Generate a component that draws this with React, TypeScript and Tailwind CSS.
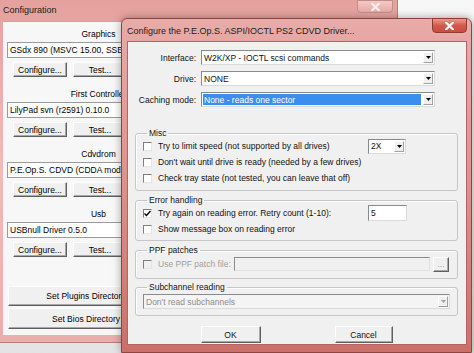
import React from "react";

function Arrow({ disabled = false }: { disabled?: boolean }) {
  return (
    <div className="w-[10px] h-full flex items-center justify-center bg-[#f0f0f0] border border-t-white border-l-white border-r-[#a0a0a0] border-b-[#a0a0a0]">
      <svg width="5" height="3" viewBox="0 0 5 3">
        <path d="M0 0h5L2.5 3z" fill={disabled ? "#a0a0a0" : "#000"} />
      </svg>
    </div>
  );
}

function Combo({
  text,
  className = "",
  selected = false,
  disabled = false,
}: {
  text: string;
  className?: string;
  selected?: boolean;
  disabled?: boolean;
}) {
  return (
    <div
      className={`flex h-[15px] border border-t-[#8a8a8a] border-l-[#8a8a8a] border-r-[#dadada] border-b-[#dadada] p-[1px] ${
        disabled ? "bg-[#f4f4f4] text-[#8c8c8c]" : "bg-white"
      } ${className}`}
    >
      <div className="flex-1 min-w-0 flex items-center pr-[2px]">
        {selected ? (
          <span className="w-full h-full flex items-center px-[1px] bg-[#3a8ef0] text-white whitespace-nowrap">
            {text}
          </span>
        ) : (
          <span className="px-[1px] whitespace-nowrap overflow-hidden">{text}</span>
        )}
      </div>
      <Arrow disabled={disabled} />
    </div>
  );
}

function Field({ text, className = "" }: { text: string; className?: string }) {
  return (
    <div
      className={`flex items-center h-[16px] bg-white border border-t-[#8a8a8a] border-l-[#8a8a8a] border-r-[#dadada] border-b-[#dadada] px-[2px] whitespace-nowrap overflow-hidden ${className}`}
    >
      {text}
    </div>
  );
}

function Button({ children, className = "" }: { children: React.ReactNode; className?: string }) {
  return (
    <button
      className={`flex items-center justify-center bg-[#f0f0f0] border border-t-white border-l-white border-r-[#5f5f5f] border-b-[#5f5f5f] shadow-[inset_-1px_-1px_0_#a8a8a8] whitespace-nowrap ${className}`}
    >
      {children}
    </button>
  );
}

function Check({ checked = false, disabled = false }: { checked?: boolean; disabled?: boolean }) {
  return (
    <span
      className={`w-[9px] h-[9px] shrink-0 flex items-center justify-center border border-t-[#7f7f7f] border-l-[#7f7f7f] border-r-[#e4e4e4] border-b-[#e4e4e4] ${
        disabled ? "bg-[#f0f0f0]" : "bg-white"
      }`}
    >
      {checked && (
        <svg width="7" height="7" viewBox="0 0 7 7">
          <path d="M0.5 3.5l2 2L6.5 1" stroke="#000" strokeWidth="1.4" fill="none" />
        </svg>
      )}
    </span>
  );
}

function CheckRow({
  label,
  checked = false,
  disabled = false,
  children,
}: {
  label: string;
  checked?: boolean;
  disabled?: boolean;
  children?: React.ReactNode;
}) {
  return (
    <div className="flex items-center h-[16px]">
      <Check checked={checked} disabled={disabled} />
      <span className={`ml-[6px] whitespace-nowrap ${disabled ? "text-[#a0a0a0]" : ""}`}>{label}</span>
      {children}
    </div>
  );
}

function Group({ title, className = "", children }: { title: string; className?: string; children: React.ReactNode }) {
  return (
    <fieldset className={`border border-[#c6c6c6] rounded-[3px] shadow-[inset_1px_1px_0_#fff] ${className}`}>
      <legend className="ml-[4px] px-[2px] leading-[10px]">{title}</legend>
      {children}
    </fieldset>
  );
}

function PluginBlock({ label, value, first = false }: { label: string; value: string; first?: boolean }) {
  return (
    <div className="flex flex-col">
      <div className={`w-[183px] text-center leading-[10px] ${first ? "" : "mt-[12px]"}`}>{label}</div>
      <div className="w-[183px] mt-[3px] h-[16px] flex bg-white border border-[#9a9a9a] p-[1px]">
        <div className="flex-1 flex items-center px-[1px] whitespace-nowrap overflow-hidden">{value}</div>
        <Arrow />
      </div>
      <div className="flex gap-[6px] ml-[6px] mt-[4px]">
        <Button className="w-[54px] h-[15px]">Configure...</Button>
        <Button className="w-[54px] h-[15px]">Test...</Button>
      </div>
    </div>
  );
}

function CloseButton({ active = false }: { active?: boolean }) {
  return (
    <div
      className={`flex items-center justify-center rounded-b-[4px] border ${
        active
          ? "w-[35px] h-[15px] bg-linear-to-b from-[#e99a8e] via-[#d2594b] to-[#c9503f] border-[#8e3b33] shadow-[0_0_4px_#f3b0a6]"
          : "w-[36px] h-[13px] bg-linear-to-b from-[#f1c9c5] to-[#e6aba6] border-[#c48c88]"
      }`}
    >
      <svg width="9" height="8" viewBox="0 0 9 8">
        <path
          d="M1 0.5L8 7.5M8 0.5L1 7.5"
          stroke={active ? "#fff" : "#fbeeee"}
          strokeWidth="2.2"
          strokeLinecap="square"
        />
      </svg>
    </div>
  );
}

function BackWindow() {
  return (
    <div className="absolute left-0 top-0 w-[398px] h-[343px] flex flex-col bg-linear-to-b from-[#e5a19e] via-[#eebcb9] to-[#e9aeab] border-r border-b border-[#b97c78]">
      <div className="h-[21px] flex items-start justify-between">
        <span className="pl-[3px] pt-[5px] text-[9px] leading-[11px] text-[#1c1c1c]">Configuration</span>
        <div className="mr-[4px]">
          <CloseButton />
        </div>
      </div>
      <div className="flex-1 ml-[3px] mr-[6px] mb-[7px] bg-[#f7f7f7] border-t border-[#c9a3a0] flex flex-col pl-[4px] pt-[7px]">
        <PluginBlock first label="Graphics" value="GSdx 890 (MSVC 15.00, SSE41) 0.1.16" />
        <PluginBlock label="First Controller" value="LilyPad svn (r2591) 0.10.0" />
        <PluginBlock label="Cdvdrom" value="P.E.Op.S. CDVD (CDDA mod) 1.3.0" />
        <PluginBlock label="Usb" value="USBnull Driver 0.5.0" />
        <Button className="w-[156px] h-[20px] ml-[1px] mt-[29px]">Set Plugins Directory</Button>
        <Button className="w-[156px] h-[21px] ml-[1px] mt-[2px]">Set Bios Directory</Button>
      </div>
    </div>
  );
}

function FrontDialog() {
  return (
    <div className="absolute left-[121px] top-[18px] w-[351px] h-[335px] flex flex-col rounded-t-[6px] bg-linear-to-b from-[#e8aba8] via-[#dc918c] to-[#cb6f69] border border-[#8c4540] shadow-[0_0_8px_rgba(0,0,0,0.35)]">
      <div className="h-[22px] flex items-start justify-between">
        <span className="pl-[5px] pt-[7px] text-[9px] leading-[11px] text-[#1c1c1c] whitespace-nowrap">
          Configure the P.E.Op.S. ASPI/IOCTL PS2 CDVD Driver...
        </span>
        <div className="mr-[4px] -mt-[1px]">
          <CloseButton active />
        </div>
      </div>
      <div className="flex-1 ml-[5px] mr-[4px] mb-[7px] bg-[#f0f0f0] border border-[#b06560] flex flex-col pl-[7px] pr-[8px] pt-[8px] text-[#111]">
        <div className="grid grid-cols-[61px_234px] gap-x-[5px] gap-y-[6px] items-center">
          <span className="text-right">Interface:</span>
          <Combo text="W2K/XP - IOCTL scsi commands" />
          <span className="text-right">Drive:</span>
          <Combo text="NONE" />
          <span className="text-right whitespace-nowrap">Caching mode:</span>
          <Combo text="None - reads one sector" selected />
        </div>

        <Group title="Misc" className="mt-[21px] pl-[7px] pb-[4px]">
          <CheckRow label="Try to limit speed (not supported by all drives)">
            <Combo text="2X" className="ml-auto mr-[51px] w-[38px]" />
          </CheckRow>
          <CheckRow label="Don't wait until drive is ready (needed by a few drives)" />
          <CheckRow label="Check tray state (not tested, you can leave that off)" />
        </Group>

        <Group title="Error handling" className="mt-[4px] pl-[7px] pb-[3px]">
          <CheckRow checked label="Try again on reading error. Retry count (1-10):">
            <Field text="5" className="ml-auto mr-[50px] w-[39px] h-[15px]" />
          </CheckRow>
          <CheckRow label="Show message box on reading error" />
        </Group>

        <Group title="PPF patches" className="mt-[4px] pl-[7px] pr-[8px] pt-[1px] pb-[6px]">
          <div className="flex items-center h-[16px]">
            <Check disabled />
            <span className="ml-[6px] text-[#a0a0a0] whitespace-nowrap">Use PPF patch file:</span>
            <div className="flex-1 ml-[3px] h-[14px] bg-[#f0f0f0] border border-t-[#8a8a8a] border-l-[#8a8a8a] border-r-[#e0e0e0] border-b-[#e0e0e0]" />
            <Button className="w-[16px] h-[15px] ml-[3px] text-[#a0a0a0]">...</Button>
          </div>
        </Group>

        <Group title="Subchannel reading" className="mt-[3px] px-[7px] pt-[2px] pb-[6px]">
          <Combo text="Don't read subchannels" disabled />
        </Group>

        <div className="flex justify-center gap-[74px] mt-[10px]">
          <Button className="w-[60px] h-[17px] border-r-[#2e2e2e] border-b-[#2e2e2e]">OK</Button>
          <Button className="w-[58px] h-[17px]">Cancel</Button>
        </div>
      </div>
    </div>
  );
}

export default function App() {
  return (
    <div className="relative w-[474px] h-[353px] overflow-hidden bg-linear-to-b from-[#f7f7f7] to-[#e4e4e4] font-['Liberation_Sans',Arial,sans-serif] text-[8.5px] leading-[10px] text-black">
      <BackWindow />
      <FrontDialog />
    </div>
  );
}
